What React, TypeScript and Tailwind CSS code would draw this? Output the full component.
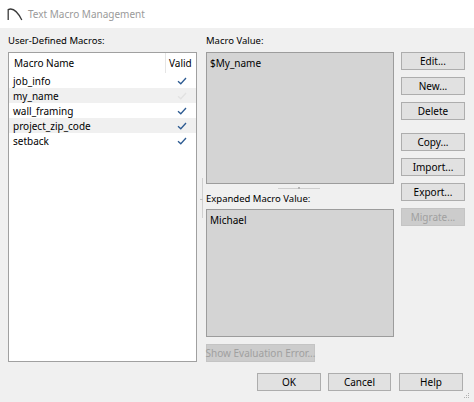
import React from "react";

function Btn({ label, disabled, w = "w-[64px]" }: { label: string; disabled?: boolean; w?: string }) {
  return (
    <div
      className={`${w} h-[18px] flex items-center justify-center border whitespace-nowrap text-[10px] leading-none ${
        disabled ? "text-[#a0a0a0] bg-[#cccccc] border-[#c4c4c4]" : "text-black bg-[#e1e1e1] border-[#adadad]"
      }`}
    >
      {label}
    </div>
  );
}

function Check({ light }: { light?: boolean }) {
  return (
    <svg width="10" height="8" viewBox="0 0 10 8">
      <path
        d="M1 4.2 L3.8 6.8 L9 1"
        fill="none"
        stroke={light ? "#e2e2e2" : "#2d5b92"}
        strokeWidth="1.3"
      />
    </svg>
  );
}

const rows = [
  { name: "job_info", valid: true },
  { name: "my_name", valid: false },
  { name: "wall_framing", valid: true },
  { name: "project_zip_code", valid: true },
  { name: "setback", valid: true },
];

export default function App() {
  return (
    <div className="w-[474px] h-[402px] bg-[#f0f0f0] flex flex-col font-['Noto_Sans',sans-serif] text-[10px] text-black relative overflow-hidden">
      {/* title bar */}
      <div className="h-[28px] bg-white flex items-center pl-[7px] gap-[5px] shrink-0">
        <svg width="16" height="14" viewBox="0 0 16 14">
          <path d="M1.2 13 L1.2 2.6 Q8 -0.5 14.8 13" fill="none" stroke="#3a3a3a" strokeWidth="1.3" />
        </svg>
        <span className="text-[#9a9a9a] text-[10px] leading-none">Text Macro Management</span>
      </div>

      {/* main */}
      <div className="flex pl-[8px] pt-[6px]">
        {/* left */}
        <div className="w-[189px] flex flex-col">
          <div className="h-[14px] leading-[14px] mb-[4px] text-[9.5px]">User-Defined Macros:</div>
          <div className="h-[310px] bg-white border border-[#a0a0a0] flex flex-col">
            <div className="h-[20px] flex items-stretch">
              <div className="w-[157px] pl-[5px] flex items-center border-r border-[#e5e5e5]">Macro Name</div>
              <div className="flex-1 flex items-center pl-[3px]">Valid</div>
            </div>
            {rows.map((r, i) => (
              <div
                key={r.name}
                className={`h-[15px] flex items-center ${i % 2 === 1 ? "bg-[#f0f0f0]" : "bg-white"}`}
              >
                <div className="w-[157px] pl-[4px] leading-none">{r.name}</div>
                <div className="flex-1 flex justify-center pl-[2px]">
                  <Check light={!r.valid} />
                </div>
              </div>
            ))}
          </div>
        </div>

        {/* middle */}
        <div className="ml-[9px] w-[188px] flex flex-col relative">
          <div className="h-[14px] leading-[14px] mb-[4px] text-[9.5px]">Macro Value:</div>
          <div className="h-[132px] bg-[#d4d4d4] border border-[#9c9c9c] pl-[3px] pt-[3px] leading-[14px]">$My_name</div>
          <div className="h-[8px] relative">
            <div className="absolute left-[72px] top-[4px] w-[42px] h-px bg-[#cfcfcf]" />
            <div className="absolute left-[92px] top-[3px] w-[2px] h-[2px] bg-[#b5b5b5]" />
          </div>
          <div className="h-[14px] leading-[14px] mb-[3px] text-[9.5px]">Expanded Macro Value:</div>
          <div className="h-[128px] bg-[#d4d4d4] border border-[#9c9c9c] pl-[3px] pt-[3px] leading-[14px]">Michael</div>
          <div className="mt-[7px]">
            <Btn label="Show Evaluation Error..." disabled w="w-[109px]" />
          </div>
          {/* vertical splitter */}
          <div className="absolute left-[-4px] top-[144px] w-px h-[40px] bg-[#cfcfcf]" />
          <div className="absolute left-[-6px] top-[165px] w-[3px] h-px bg-[#c0c0c0]" />
        </div>

        {/* right */}
        <div className="ml-[7px] w-[64px] pt-[18px] flex flex-col">
          <Btn label="Edit..." />
          <div className="mt-[7px]"><Btn label="New..." /></div>
          <div className="mt-[7px]"><Btn label="Delete" /></div>
          <div className="mt-[13px]"><Btn label="Copy..." /></div>
          <div className="mt-[7px]"><Btn label="Import..." /></div>
          <div className="mt-[7px]"><Btn label="Export..." /></div>
          <div className="mt-[7px]"><Btn label="Migrate..." disabled /></div>
        </div>
      </div>

      {/* bottom buttons */}
      <div className="flex justify-end pr-[11px] mt-[11px] gap-[7px]">
        <Btn label="OK" />
        <Btn label="Cancel" w="w-[63px]" />
        <div className="ml-[1px]"><Btn label="Help" /></div>
      </div>

      {/* resize grip */}
      <svg className="absolute right-[4px] bottom-[3px]" width="7" height="7" viewBox="0 0 7 7">
        <rect x="5" y="1" width="1" height="1" fill="#b0b0b0" />
        <rect x="3" y="3" width="1" height="1" fill="#b0b0b0" />
        <rect x="5" y="3" width="1" height="1" fill="#b0b0b0" />
        <rect x="1" y="5" width="1" height="1" fill="#b0b0b0" />
        <rect x="3" y="5" width="1" height="1" fill="#b0b0b0" />
        <rect x="5" y="5" width="1" height="1" fill="#b0b0b0" />
      </svg>
    </div>
  );
}
